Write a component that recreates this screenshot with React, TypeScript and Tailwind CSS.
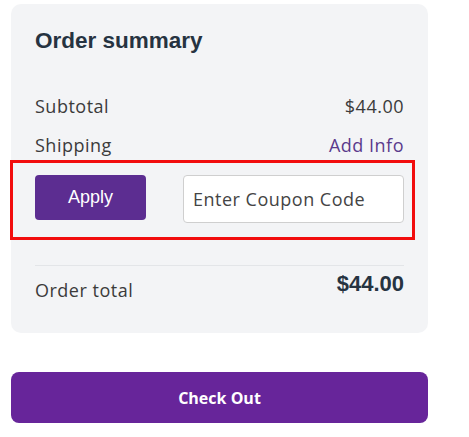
import React from 'react';

const body = { fontFamily: '"Open Sans", "Noto Sans", sans-serif' };
const head = { fontFamily: '"Liberation Sans", Arial, sans-serif' };

function Row({ label, value, accent }: { label: string; value: string; accent?: boolean }) {
  return (
    <div className="flex items-start justify-between text-[18px] leading-6 tracking-[0.5px] text-[#3b3b3b]">
      <span>{label}</span>
      <span className={accent ? 'text-[#5b3a8c]' : ''}>{value}</span>
    </div>
  );
}

export default function App() {
  return (
    <div className="h-[437px] w-[469px] bg-white pl-[11px] pt-1" style={body}>
      <div className="w-[417px] rounded-[10px] bg-[#f3f4f6] px-6 pb-[31px] pt-[23px]">
        <h2 className="text-[22.5px] font-bold leading-7 text-[#263341]" style={head}>
          Order summary
        </h2>

        <div className="mt-[39px] flex flex-col gap-[15px]">
          <Row label="Subtotal" value="$44.00" />
          <Row label="Shipping" value="Add Info" accent />
        </div>

        {/* coupon row, outlined in red */}
        <div className="-ml-[25px] -mr-[11px] mt-[3px] flex items-start justify-between border-[3px] border-[#f20d0d] pb-[14px] pl-[22px] pr-2 pt-3">
          <button
            className="h-[45px] w-[111px] rounded-[4px] bg-[#5c2d91] text-[18px] text-white"
            style={head}
          >
            Apply
          </button>
          <input
            className="h-12 w-[221px] rounded-[4px] border border-[#cfcfcf] bg-white pl-[9px] text-[18px] tracking-[0.5px] text-[#444] placeholder:text-[#444] outline-none"
            placeholder="Enter Coupon Code"
            style={body}
          />
        </div>

        <div className="mt-[25px] h-px bg-[#e3e5e8]" />

        <div className="mt-1 flex items-start justify-between">
          <span className="mt-2 text-[18px] leading-6 tracking-[0.5px] text-[#3b3b3b]">Order total</span>
          <span className="text-[22px] font-bold leading-7 text-[#263341]" style={head}>
            $44.00
          </span>
        </div>
      </div>

      <button className="mt-[39px] h-[51px] w-[417px] rounded-lg bg-[#67259a] text-[16px] font-bold text-white">
        Check Out
      </button>
    </div>
  );
}
